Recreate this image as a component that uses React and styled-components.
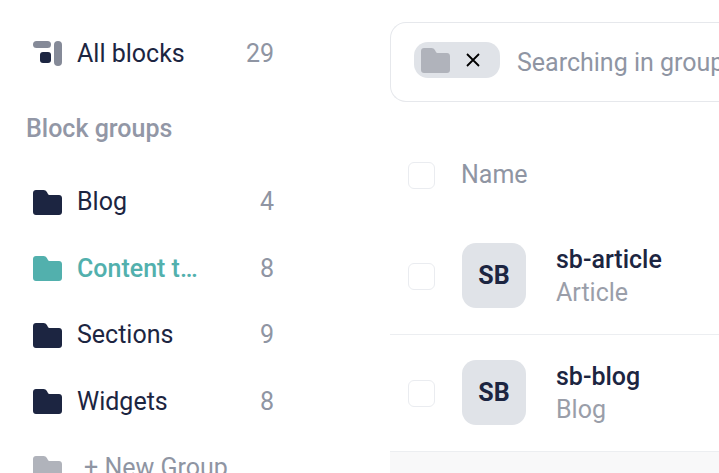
import React from 'react';
import styled, { createGlobalStyle } from 'styled-components';

const Global = createGlobalStyle`
  html, body { margin: 0; padding: 0; background: #fff; overflow: hidden; }
  * { box-sizing: border-box; }
`;
const Page = styled.div`
  width: 719px; height: 473px; overflow: hidden; display: flex;
  font-family: Roboto, "Liberation Sans", sans-serif; color: #1c2541;
`;
const Sidebar = styled.aside`
  width: 390px; flex: none; padding: 35px 116px 0 26px;
`;
const AllRow = styled.div`
  display: flex; align-items: center; height: 38px; padding-left: 7px; gap: 15px;
`;
const Label = styled.span`
  flex: 1; min-width: 0; font-size: 25px; line-height: 38px; white-space: nowrap;
  overflow: hidden; text-overflow: ellipsis;
  font-weight: ${p => (p.$active ? 500 : 400)};
  color: ${p => (p.$active ? '#52b0ad' : p.$muted ? '#8f95a3' : '#1c2541')};
  ${p => p.$active && 'max-width: 122px; margin-right: auto;'}
  ${p => p.$muted && 'padding-left: 7px;'}
`;
const Count = styled.span`
  font-size: 25px; line-height: 38px; color: #8f95a3; margin-left: auto;
`;
const GroupsTitle = styled.h2`
  margin: 42px 0 40px; font-size: 25px; line-height: 28px; font-weight: 500; color: #9297a6;
`;
const GroupList = styled.div`
  display: flex; flex-direction: column; gap: 28.5px;
`;
const Group = styled(AllRow)``;
const Main = styled.main`
  flex: 1; min-width: 0; padding-top: 22px; overflow: hidden;
`;
const SearchBox = styled.div`
  width: 420px; height: 80px; border: 1px solid #e6e8ec; border-right: 0; border-radius: 16px 0 0 16px;
  display: flex; align-items: center; padding: 0 0 0 23px; gap: 17px;
`;
const Chip = styled.div`
  width: 86px; height: 36px; margin-bottom: 4px; border-radius: 14px; background: #e0e3e8; flex: none;
  display: flex; align-items: center; padding-left: 7px; gap: 16px;
`;
const Placeholder = styled.span`
  font-size: 25px; line-height: 38px; color: #8f95a3; white-space: nowrap; padding-top: 1px;
`;
const HeaderRow = styled.div`
  display: flex; align-items: center; height: 38px; margin-top: 54px; padding-left: 18px; gap: 27px;
`;
const Check = styled.span`
  width: 27px; height: 27px; flex: none; border: 1px solid #eaecf0; border-radius: 6px; background: #fff;
`;
const HeaderName = styled.span`
  font-size: 25px; color: #8f95a3; margin: 0 0 2px -1px;
`;
const Row = styled.div`
  display: flex; align-items: center; height: 117px; padding-left: 18px; gap: 27px;
  border-bottom: 1px solid #eceef1; width: 420px;
`;
const Avatar = styled.div`
  width: 64px; height: 65px; margin-bottom: 2px; flex: none; border-radius: 14px; background: #e0e3e8;
  display: flex; align-items: center; justify-content: center;
  font-size: 25px; font-weight: 700; color: #1c2541;
`;
const Info = styled.div`
  display: flex; flex-direction: column; margin-left: 3px;
`;
const Title = styled.span`
  font-size: 25px; line-height: 33px; font-weight: 500; color: #1c2541;
`;
const Sub = styled.span`
  font-size: 25px; line-height: 33px; color: #9a9ea9;
`;
const RowList = styled.div`
  margin-top: 24px;
`;
const GreyBand = styled.div`
  height: 40px; width: 420px; background: #f8f8f9;
`;

const Folder = ({ color, w = 29, h = 25 }) => (
  <svg width={w} height={h} viewBox="0 0 29 25" style={{ flex: 'none' }}>
    <path fill={color} d="M3 0h7.5c1.6 0 2.6.8 3.4 2l1.2 2.2c.3.5.7.8 1.3.8H26c1.7 0 3 1.3 3 3v14c0 1.7-1.3 3-3 3H3c-1.7 0-3-1.3-3-3V3c0-1.7 1.3-3 3-3z" />
  </svg>
);
const BlocksIcon = () => (
  <svg width="29" height="25" viewBox="0 0 29 25" style={{ flex: 'none', marginBottom: 2 }}>
    <rect x="0" y="0" width="18" height="7" rx="3.5" fill="#858a98" />
    <rect x="21" y="0" width="8" height="25" rx="4" fill="#858a98" />
    <rect x="7" y="11" width="11" height="11" rx="3" fill="#1c2541" />
  </svg>
);
const CloseIcon = () => (
  <svg width="14" height="14" viewBox="0 0 14 14" style={{ flex: 'none' }}>
    <path d="M1 1l12 12M13 1L1 13" stroke="#000" strokeWidth="1.8" fill="none" />
  </svg>
);

const groups = [
  { name: 'Blog', n: 4 },
  { name: 'Content types', n: 8, active: true },
  { name: 'Sections', n: 9 },
  { name: 'Widgets', n: 8 },
];

export default function App() {
  return (
    <Page>
      <Global />
      <Sidebar>
        <AllRow>
          <BlocksIcon />
          <Label>All blocks</Label>
          <Count>29</Count>
        </AllRow>
        <GroupsTitle>Block groups</GroupsTitle>
        <GroupList>
          {groups.map(g => (
            <Group key={g.name}>
              <Folder color={g.active ? '#52b0ad' : '#1c2541'} />
              <Label $active={g.active}>{g.name}</Label>
              <Count>{g.n}</Count>
            </Group>
          ))}
          <Group>
            <Folder color="#b0b3bb" />
            <Label $muted>+ New Group</Label>
          </Group>
        </GroupList>
      </Sidebar>
      <Main>
        <SearchBox>
          <Chip>
            <Folder color="#b0b3bb" />
            <CloseIcon />
          </Chip>
          <Placeholder>Searching in group</Placeholder>
        </SearchBox>
        <HeaderRow>
          <Check />
          <HeaderName>Name</HeaderName>
        </HeaderRow>
        <RowList>
          <Row>
            <Check />
            <Avatar>SB</Avatar>
            <Info>
              <Title>sb-article</Title>
              <Sub>Article</Sub>
            </Info>
          </Row>
          <Row>
            <Check />
            <Avatar>SB</Avatar>
            <Info>
              <Title>sb-blog</Title>
              <Sub>Blog</Sub>
            </Info>
          </Row>
          <GreyBand />
        </RowList>
      </Main>
    </Page>
  );
}
